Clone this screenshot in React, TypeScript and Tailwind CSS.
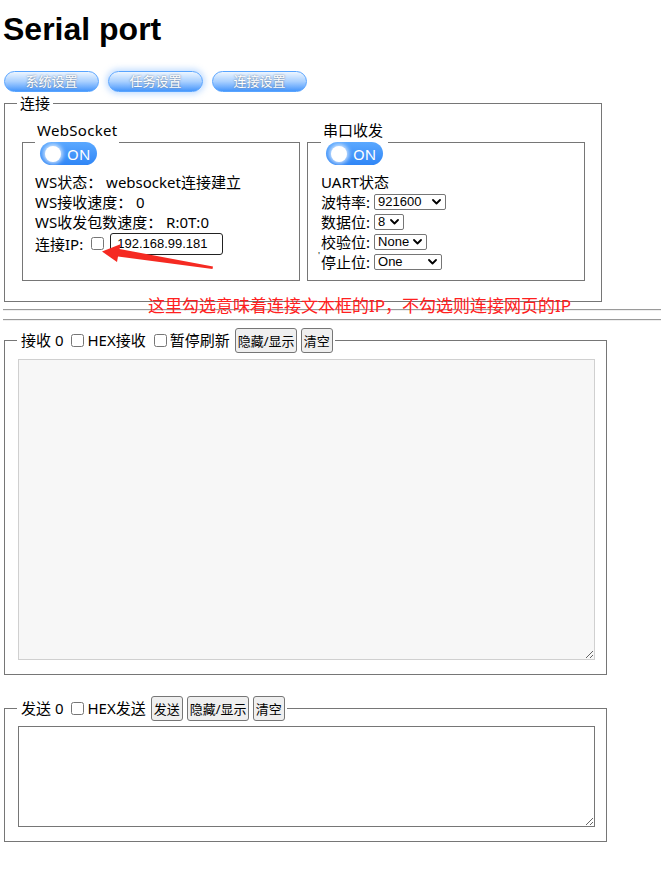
import { useState } from "react";

// small chevron used for the selects
function Chevron() {
  return (
    <svg className="pointer-events-none absolute right-[5px] top-[5px]" width="9" height="6" viewBox="0 0 9 6" fill="none">
      <path d="M1 1L4.5 4.5L8 1" stroke="#000" strokeWidth="1.8" strokeLinecap="round" strokeLinejoin="round" />
    </svg>
  );
}

function Toggle() {
  return (
    <div className="mx-[3px] mt-[2px] flex h-[23px] w-[57px] items-center rounded-full bg-linear-to-b from-[#5aa8ff] to-[#2f86f6] pl-[5px]">
      <div className="h-[16px] w-[16px] rounded-full bg-white shadow-[0_0_4px_2px_rgba(255,255,255,0.7)]" />
      <span className="ml-[6px] text-[15px] leading-[20px] text-white">ON</span>
    </div>
  );
}

function Select({ value, options, width }: { value: string; options: string[]; width: string }) {
  return (
    <span className={`relative ml-[4px] inline-flex ${width}`}>
      <select
        defaultValue={value}
        className="h-[16px] w-full appearance-none rounded-[2px] border border-[#767676] bg-white pl-[3px] font-['Liberation_Sans',sans-serif] text-[13px] leading-[14px] text-black"
      >
        {options.map((o) => (
          <option key={o}>{o}</option>
        ))}
      </select>
      <Chevron />
    </span>
  );
}

const navTabs = ["系统设置", "任务设置", "连接设置"];

const smallBtn =
  "h-[25px] rounded-[3px] border border-[#767676] bg-[#efefef] px-[2px] text-[13px] leading-[20px] text-black whitespace-nowrap overflow-hidden";
const checkbox = "ml-[8px] mr-[3px] h-[13px] w-[13px]";

export default function App() {
  const [useIp, setUseIp] = useState(false);

  return (
    <div className="relative min-h-[884px] bg-white font-['Noto_Sans','Noto_Sans_CJK_SC',sans-serif] text-[15px] text-black">
      <h1 className="pl-[3px] pt-[11px] font-['Liberation_Sans',sans-serif] text-[32px] font-bold leading-[37px]">Serial port</h1>

      <div className="mt-[23px] flex gap-[9px] pl-[4px]">
        {navTabs.map((t, i) => (
          <button
            key={t}
            className={`h-[21px] w-[95px] rounded-full border border-[#58a4ff] bg-linear-to-b from-[#eef6ff] via-[#a9d0ff] to-[#4596fb] text-[13px] leading-[19px] text-white [text-shadow:0_0_2px_#5b6b80] ${
              i === 1 ? "shadow-[0_0_6px_2px_rgba(120,180,255,0.45)]" : ""
            }`}
          >
            {t}
          </button>
        ))}
      </div>

      {/* 连接 */}
      <fieldset className="relative ml-[4px] mt-[1px] w-[598px] border border-[#767676] pb-[20px] pl-[12px] pt-[7px]">
        <legend className="px-[3px] leading-[20px]">连接</legend>
        <div className="flex gap-[7px] pl-[5px]">
          <fieldset className="w-[278px] border border-[#767676] pb-[8px] pl-[12px] pt-[7px]">
            <legend className="px-[2px] leading-[20px] tracking-[0.3px]">
              WebSocket
              <Toggle />
            </legend>
            <div className="leading-[20px]">WS状态： websocket连接建立</div>
            <div className="leading-[20px]">WS接收速度： 0</div>
            <div className="leading-[20px]">WS收发包数速度： R:0T:0</div>
            <div className="mt-[1px] flex h-[21px] items-center">
              <span className="leading-[20px]">连接IP:</span>
              <input type="checkbox" checked={useIp} onChange={(e) => setUseIp(e.target.checked)} className="ml-[8px] mr-[6px] h-[13px] w-[13px]" />
              <input
                defaultValue="192.168.99.181"
                className="h-[22px] w-[113px] rounded-[3px] border border-[#222] pl-[6px] font-['Liberation_Sans',sans-serif] text-[13px] text-black"
              />
            </div>
          </fieldset>

          <fieldset className="w-[278px] border border-[#767676] pb-[8px] pl-[13px] pt-[7px]">
            <legend className="px-[2px] leading-[20px]">
              串口收发
              <Toggle />
            </legend>
            <div className="leading-[20px]">UART状态</div>
            <div className="flex h-[20px] items-center">
              <span>波特率:</span>
              <Select value="921600" options={["9600", "115200", "921600"]} width="w-[72px]" />
            </div>
            <div className="flex h-[20px] items-center">
              <span>数据位:</span>
              <Select value="8" options={["7", "8"]} width="w-[30px]" />
            </div>
            <div className="flex h-[20px] items-center">
              <span>校验位:</span>
              <Select value="None" options={["None", "Odd", "Even"]} width="w-[53px]" />
            </div>
            <div className="flex h-[20px] items-center">
              <span className="relative">
                <span className="absolute -left-[3px] -top-[1px] text-[9px] leading-[12px]">'</span>
                停止位:
              </span>
              <Select value="One" options={["One", "Two"]} width="w-[68px]" />
            </div>
          </fieldset>
        </div>

        <p className="absolute left-[143px] top-[182px] whitespace-nowrap text-[17px] leading-[22px] text-[#ff2020]">
          这里勾选意味着连接文本框的IP，不勾选则连接网页的IP
        </p>
      </fieldset>

      {/* annotation arrow */}
      <svg className="pointer-events-none absolute left-0 top-0" width="661" height="884" viewBox="0 0 661 884">
        <polygon points="102,251.5 121,244 119.5,249 213,266.5 212.5,269 118,256.5 117,262" fill="#f52a22" />
      </svg>

      <hr className="ml-[3px] mt-[7px] h-[2px] border-t border-b border-t-[#9a9a9a] border-b-[#eeeeee]" />
      <hr className="ml-[3px] mt-[8px] h-[2px] border-t border-b border-t-[#9a9a9a] border-b-[#eeeeee]" />

      {/* 接收 */}
      <fieldset className="ml-[4px] mt-[7px] w-[603px] border border-[#767676] pb-[14px] pl-[12px] pt-[6px]">
        <legend className="flex h-[25px] items-center pl-[4px] pr-[2px]">
          <span>接收 0</span>
          <input type="checkbox" className={checkbox} />
          <span>HEX接收</span>
          <input type="checkbox" className={checkbox} />
          <span>暂停刷新</span>
          <button className={`${smallBtn} ml-[5px] w-[62px]`}>隐藏/显示</button>
          <button className={`${smallBtn} ml-[4px] w-[32px]`}>清空</button>
        </legend>
        <textarea
          readOnly
          className="ml-[1px] block h-[301px] w-[577px] resize border border-[#d0d0d0] bg-[#f7f7f7]"
        />
      </fieldset>

      {/* 发送 */}
      <fieldset className="ml-[4px] mt-[21px] w-[603px] border border-[#767676] pb-[14px] pl-[12px] pt-[5px]">
        <legend className="flex h-[25px] items-center pl-[4px] pr-[2px]">
          <span>发送 0</span>
          <input type="checkbox" className={checkbox} />
          <span>HEX发送</span>
          <button className={`${smallBtn} ml-[5px] w-[32px]`}>发送</button>
          <button className={`${smallBtn} ml-[4px] w-[62px]`}>隐藏/显示</button>
          <button className={`${smallBtn} ml-[4px] w-[32px]`}>清空</button>
        </legend>
        <textarea className="ml-[1px] block h-[101px] w-[577px] resize border border-[#767676] bg-white" />
      </fieldset>
    </div>
  );
}
